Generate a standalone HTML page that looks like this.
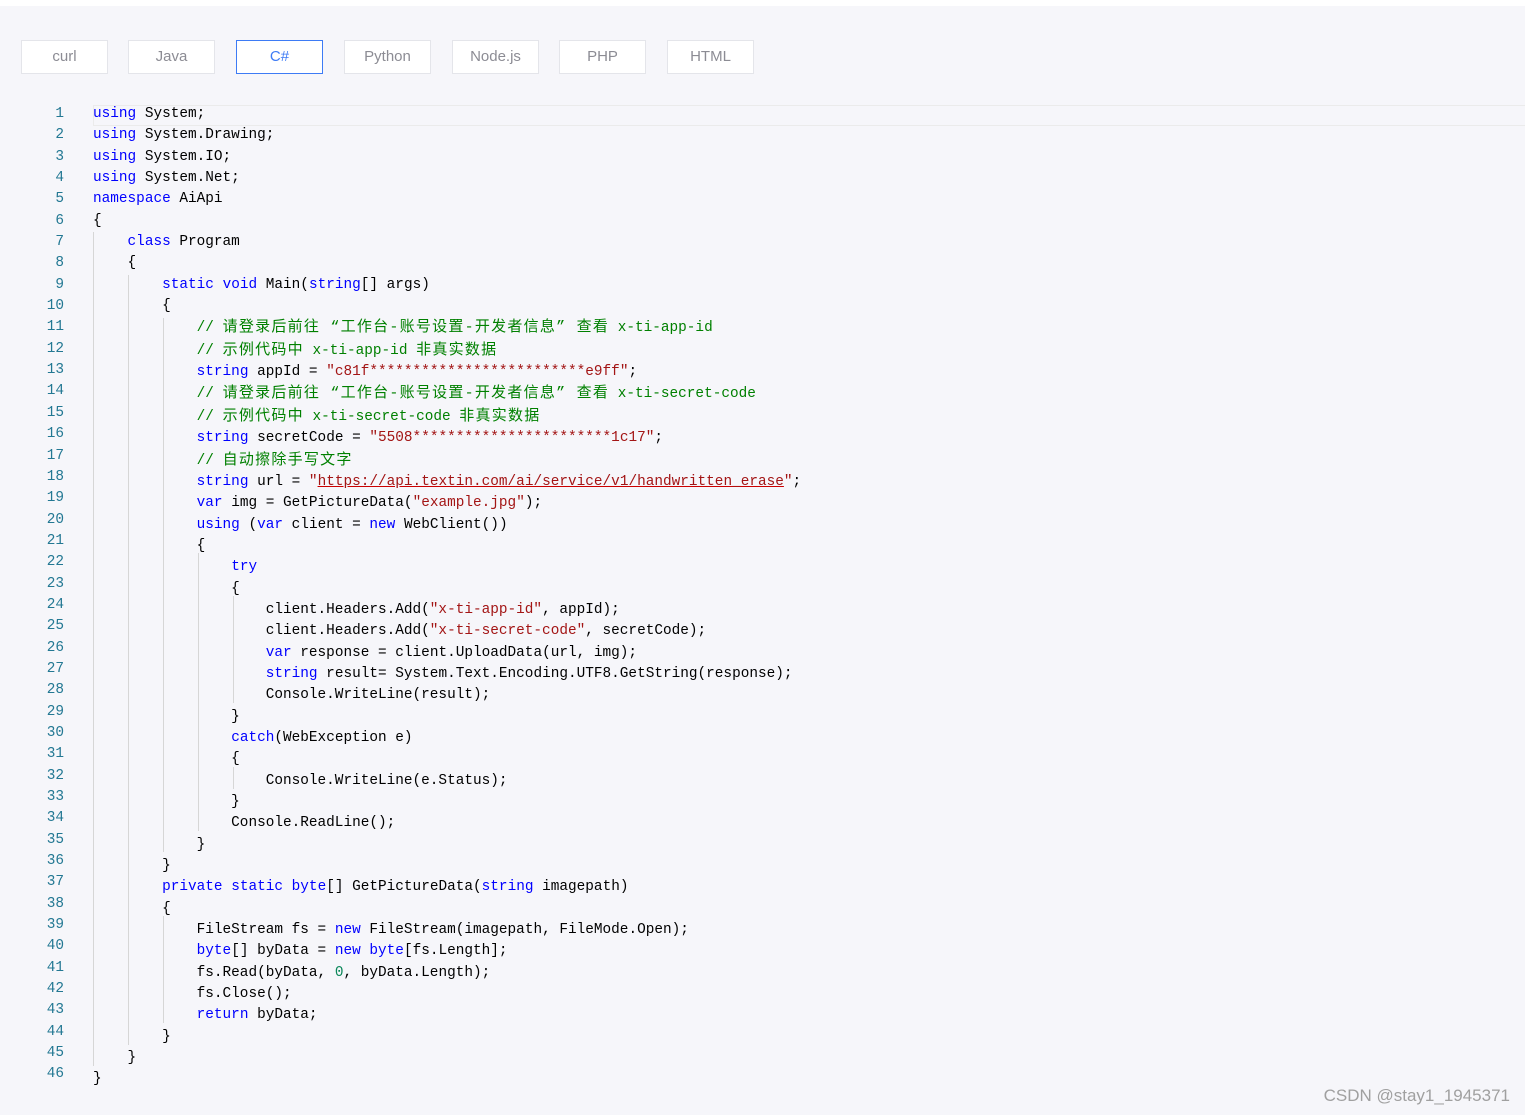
<!DOCTYPE html>
<html><head><meta charset="utf-8"><style>
body{margin:0;width:1525px;height:1115px;background:#f6f6fa;position:relative;overflow:hidden;font-family:"Liberation Sans","Noto Sans CJK SC",sans-serif}
.top{position:absolute;left:0;top:0;width:1525px;height:6px;background:#fff}
.tab{position:absolute;top:40px;width:85px;height:32px;border:1px solid #e4e5ea;background:#fff;color:#8c8c94;font-size:15px;line-height:32px;text-align:center;box-sizing:content-box}
.tab.a{border-color:#3d7bf5;color:#3d7bf5}
.code{position:absolute;left:0;top:104px;width:1525px;height:1000px;font-family:"Liberation Mono","Noto Sans CJK SC",monospace;font-size:14.4px;line-height:21.35px;color:#000}
.ln{position:absolute;left:0;top:0;width:64px;text-align:right;color:#237893;white-space:pre}
.tx{position:absolute;left:93px;top:0;white-space:pre}
.k{color:#0000ff}.s{color:#a31515}.c{color:#008000}.u{text-decoration:underline;text-decoration-color:#c00}
.z{letter-spacing:1.25px;font-size:15px}
.g{position:absolute;width:1px;background:#d6d6d6}
.hl{position:absolute;left:93px;top:105px;width:1440px;height:19px;border:1px solid #ebebeb}
.wm{position:absolute;right:15px;bottom:9px;color:#a0a0a0;font-size:17px}
</style></head><body>
<div class="top"></div>
<div class="tab" style="left:21px">curl</div>
<div class="tab" style="left:128px">Java</div>
<div class="tab a" style="left:236px">C#</div>
<div class="tab" style="left:344px">Python</div>
<div class="tab" style="left:452px">Node.js</div>
<div class="tab" style="left:559px">PHP</div>
<div class="tab" style="left:667px">HTML</div>
<div class="hl"></div>
<div class="g" style="left:93px;top:232px;height:834px"></div>
<div class="g" style="left:128px;top:275px;height:770px"></div>
<div class="g" style="left:163px;top:318px;height:534px"></div>
<div class="g" style="left:198px;top:553px;height:278px"></div>
<div class="g" style="left:233px;top:596px;height:107px"></div>
<div class="g" style="left:233px;top:767px;height:22px"></div>
<div class="g" style="left:163px;top:916px;height:107px"></div>
<div class="code"><div class="ln">1
2
3
4
5
6
7
8
9
10
11
12
13
14
15
16
17
18
19
20
21
22
23
24
25
26
27
28
29
30
31
32
33
34
35
36
37
38
39
40
41
42
43
44
45
46</div><div class="tx"><span class="k">using</span> System;
<span class="k">using</span> System.Drawing;
<span class="k">using</span> System.IO;
<span class="k">using</span> System.Net;
<span class="k">namespace</span> AiApi
{
    <span class="k">class</span> Program
    {
        <span class="k">static</span> <span class="k">void</span> Main(<span class="k">string</span>[] args)
        {
            <span class="c">// <span class="z">请登录后前往 “工作台-账号设置-开发者信息” 查看</span> x-ti-app-id</span>
            <span class="c">// <span class="z">示例代码中</span> x-ti-app-id <span class="z">非真实数据</span></span>
            <span class="k">string</span> appId = <span class="s">"c81f*************************e9ff"</span>;
            <span class="c">// <span class="z">请登录后前往 “工作台-账号设置-开发者信息” 查看</span> x-ti-secret-code</span>
            <span class="c">// <span class="z">示例代码中</span> x-ti-secret-code <span class="z">非真实数据</span></span>
            <span class="k">string</span> secretCode = <span class="s">"5508***********************1c17"</span>;
            <span class="c">// <span class="z">自动擦除手写文字</span></span>
            <span class="k">string</span> url = <span class="s">"<span class="u">https://api.textin.com/ai/service/v1/handwritten_erase</span>"</span>;
            <span class="k">var</span> img = GetPictureData(<span class="s">"example.jpg"</span>);
            <span class="k">using</span> (<span class="k">var</span> client = <span class="k">new</span> WebClient())
            {
                <span class="k">try</span>
                {
                    client.Headers.Add(<span class="s">"x-ti-app-id"</span>, appId);
                    client.Headers.Add(<span class="s">"x-ti-secret-code"</span>, secretCode);
                    <span class="k">var</span> response = client.UploadData(url, img);
                    <span class="k">string</span> result= System.Text.Encoding.UTF8.GetString(response);
                    Console.WriteLine(result);
                }
                <span class="k">catch</span>(WebException e)
                {
                    Console.WriteLine(e.Status);
                }
                Console.ReadLine();
            }
        }
        <span class="k">private</span> <span class="k">static</span> <span class="k">byte</span>[] GetPictureData(<span class="k">string</span> imagepath)
        {
            FileStream fs = <span class="k">new</span> FileStream(imagepath, FileMode.Open);
            <span class="k">byte</span>[] byData = <span class="k">new</span> <span class="k">byte</span>[fs.Length];
            fs.Read(byData, <span style="color:#098658">0</span>, byData.Length);
            fs.Close();
            <span class="k">return</span> byData;
        }
    }
}</div></div>
<div class="wm">CSDN @stay1_1945371</div>
</body></html>
